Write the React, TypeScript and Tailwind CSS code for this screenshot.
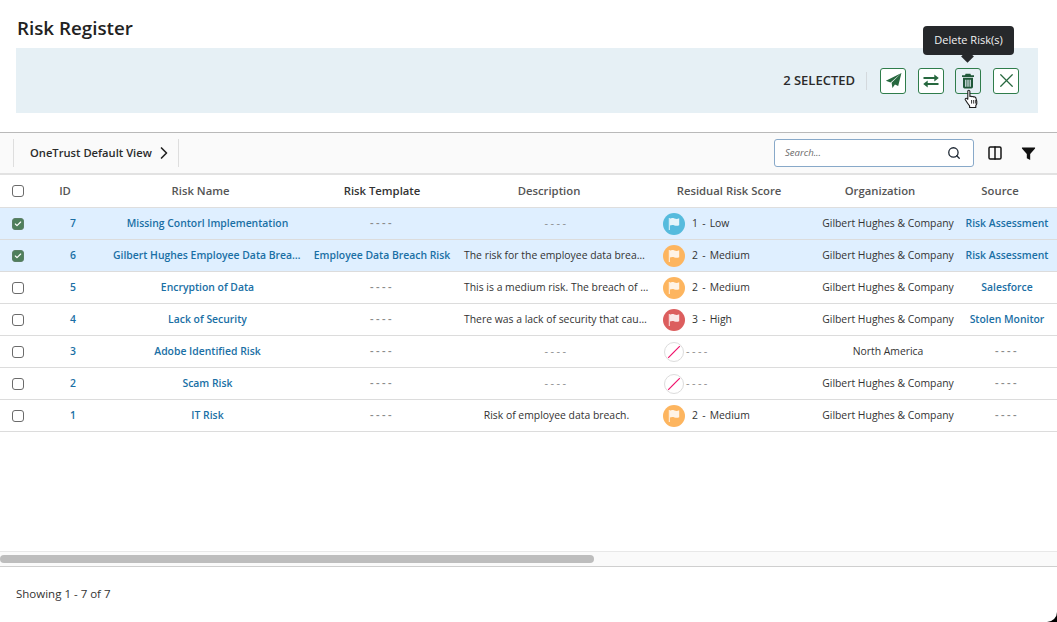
import { ChevronRight, Columns2, Search, X, Check } from "lucide-react";

type Row = {
  id: number;
  name: string;
  template?: string;
  desc?: string;
  score?: { label: string; color: string };
  org: string;
  source?: string;
  selected?: boolean;
};

const low = { label: "1 - Low", color: "bg-[#56bbdd]" };
const medium = { label: "2 - Medium", color: "bg-[#fdb55f]" };
const high = { label: "3 - High", color: "bg-[#dc5e5e]" };

const rows: Row[] = [
  { id: 7, name: "Missing Contorl Implementation", score: low, org: "Gilbert Hughes & Company", source: "Risk Assessment", selected: true },
  {
    id: 6,
    name: "Gilbert Hughes Employee Data Breach",
    template: "Employee Data Breach Risk",
    desc: "The risk for the employee data breach was high",
    score: medium,
    org: "Gilbert Hughes & Company",
    source: "Risk Assessment",
    selected: true,
  },
  { id: 5, name: "Encryption of Data", desc: "This is a medium risk. The breach of data", score: medium, org: "Gilbert Hughes & Company", source: "Salesforce" },
  { id: 4, name: "Lack of Security", desc: "There was a lack of security that caused it", score: high, org: "Gilbert Hughes & Company", source: "Stolen Monitor" },
  { id: 3, name: "Adobe Identified Risk", org: "North America" },
  { id: 2, name: "Scam Risk", org: "Gilbert Hughes & Company" },
  { id: 1, name: "IT Risk", desc: "Risk of employee data breach.", score: medium, org: "Gilbert Hughes & Company" },
];

const gridCols = "grid grid-cols-[36px_74px_197px_150px_200px_150px_162px_76px] items-center";

const Dashes = () => <span className="text-[#8a8a8a] tracking-[2.4px] text-[11px]">----</span>;

const Flag = () => (
  <svg viewBox="0 0 14 14" className="w-[14px] h-[14px]" fill="#ffffff" fillOpacity="0.85">
    <path d="M1.8 1h1v12h-1z" />
    <path d="M2.8 1.7c1.7-.9 3.2-.7 4.7-.2 1.5.5 2.9.6 4.7-.2v6.9c-1.8.8-3.2.7-4.7.2-1.5-.5-3-.7-4.7.2z" />
  </svg>
);

const ScoreBadge = ({ color }: { color: string }) => (
  <span className={`w-[22px] h-[22px] rounded-full flex items-center justify-center ${color}`}>
    <Flag />
  </span>
);

const EmptyBadge = () => (
  <span className="w-[20px] h-[20px] ml-px rounded-full border border-[#dcdcdc] bg-white flex items-center justify-center">
    <svg viewBox="0 0 20 20" className="w-[20px] h-[20px]">
      <path d="M3.5 16.5 16.5 3.5" stroke="#f0106a" strokeWidth="1.3" />
    </svg>
  </span>
);

const Checkbox = ({ checked }: { checked?: boolean }) =>
  checked ? (
    <span className="w-3 h-3 rounded-[3px] bg-[#4f7f5c] border border-[#5c7f66] flex items-center justify-center">
      <Check size={8} strokeWidth={3.5} className="text-white" />
    </span>
  ) : (
    <span className="w-3 h-3 rounded-[3px] border border-[#6b6b6b] bg-white" />
  );

const ActionButton = ({ children, active }: { children: React.ReactNode; active?: boolean }) => (
  <button
    className={`w-[26px] h-[26px] rounded-[3px] border border-[#2f7d4b] flex items-center justify-center text-[#27683f] ${
      active ? "bg-[#e6eff5]" : "bg-white"
    }`}
  >
    {children}
  </button>
);

export default function App() {
  return (
    <div className="w-[1057px] h-[622px] overflow-hidden bg-black font-['Open_Sans','Noto_Sans',sans-serif]">
      <div className="relative w-full h-full bg-white rounded-br-[10px] overflow-hidden flex flex-col">
        <h1 className="pl-[17px] h-[48px] flex items-center pt-[9px] text-[18.8px] font-semibold text-[#222]">Risk Register</h1>

        <div className="ml-4 mr-[19px] h-[65px] bg-[#e6f0f5] flex items-center justify-end pr-[19px]">
          <span className="text-[13px] font-semibold text-[#2b2b2b]">2 SELECTED</span>
          <span className="w-px h-[18px] bg-[#d4d9dd] ml-[11px] mr-[13px]" />
          <div className="flex gap-[11.67px]">
            <ActionButton>
              <svg viewBox="0 0 16 16" className="w-[17px] h-[17px]" fill="currentColor">
                <path d="M15.5 1 .8 8.2l4.4 1.6zM15.5 1 6.2 10.2 7 15l2.4-3.3 3 1.4z" />
              </svg>
            </ActionButton>
            <ActionButton>
              <svg viewBox="0 0 18 18" className="w-[18px] h-[18px]" fill="currentColor">
                <path d="M1.5 5h10.8V2.4L16.8 6l-4.5 3.6V7H1.5z" />
                <path d="M16.5 11H5.7V8.4L1.2 12l4.5 3.6V13h10.8z" />
              </svg>
            </ActionButton>
            <ActionButton active>
              <svg viewBox="0 0 16 16" className="w-[16px] h-[16px]" fill="#20583a">
                <path d="M5.6.8h4.8l.6 1.4H14v1.7H2V2.2h3zM3 4.8h10v9a1.6 1.6 0 0 1-1.6 1.6H4.6A1.6 1.6 0 0 1 3 13.8zm2.2 1.9v7h1.2v-7zm2.2 0v7h1.2v-7zm2.2 0v7h1.2v-7z" />
              </svg>
            </ActionButton>
            <ActionButton>
              <X size={23} strokeWidth={1.3} />
            </ActionButton>
          </div>
        </div>

        {/* Tooltip over the delete button */}
        <div className="absolute left-[923px] top-[26px] w-[91px] h-[29px] rounded bg-[#26282b] text-[#f2f2f2] text-[11px] flex items-center justify-center">
          Delete Risk(s)
          <span className="absolute left-[40px] top-[26px] w-[9px] h-[9px] rotate-45 bg-[#26282b]" />
        </div>

        {/* Hand cursor */}
        <svg viewBox="0 0 16 20" className="absolute left-[964px] top-[89px] w-[16px] h-[20px]">
          <path
            d="M4 1.6c.8-.7 1.9-.2 1.9.9v5c.7-.5 1.6-.4 2 .2.6-.4 1.5-.3 1.9.4.7-.4 1.7-.1 2 .7l1 3.5c.3 1.5-.1 3-1 4.3v1.9H5.6v-1.7C4 15 2.6 13 1.3 10.8c-.5-.9.5-2 1.5-1.4l1 .8V2.6c0-.4 0-.8.2-1z"
            fill="white"
            stroke="#1c1c1c"
            strokeWidth="1.1"
            strokeLinejoin="round"
          />
          <path d="M7.6 11v3.6M9.7 11v3.6M11.7 11v3.6" stroke="#1c1c1c" strokeWidth=".9" />
        </svg>

        {/* Toolbar */}
        <div className="mt-[19px] h-[43px] border-t border-[#b9b9b9] border-b-2 border-b-[#e2e2e2] bg-[#fafafa] flex items-center">
          <span className="ml-[13px] w-px h-[28px] bg-[#dedede]" />
          <span className="ml-4 text-[11.2px] font-semibold text-[#2b2b2b]">OneTrust Default View</span>
          <ChevronRight size={20} strokeWidth={2} className="ml-[2px] text-[#222]" />
          <span className="ml-[4px] w-px h-[28px] bg-[#dedede]" />
          <div className="ml-auto w-[200px] h-[28px] rounded-[3px] border border-[#88a9c9] bg-white flex items-center justify-between pl-[10px] pr-[12px]">
            <span className="italic text-[9.6px] text-[#6a6a6a]">Search...</span>
            <Search size={14} strokeWidth={2.2} className="text-[#1d2733]" />
          </div>
          <Columns2 size={16} strokeWidth={2.2} className="ml-[13px] text-[#111]" />
          <svg viewBox="0 0 16 16" className="ml-[18px] mr-[21px] w-[15px] h-[15px]" fill="#111">
            <path d="M1 1.5h14v1.2L9.8 8.6V15l-3.6-2V8.6L1 2.7z" />
          </svg>
        </div>

        {/* Header row */}
        <div className={`${gridCols} h-[33px] border-b border-[#dedede] text-[11.3px] font-semibold text-[#555]`}>
          <div className="flex justify-center">
            <Checkbox />
          </div>
          <div className="text-center pr-4">ID</div>
          <div className="text-center pr-[16px]">Risk Name</div>
          <div className="text-center text-[#333]">Risk Template</div>
          <div className="text-center pr-4">Description</div>
          <div className="text-center pr-[6px]">Residual Risk Score</div>
          <div className="text-center pr-4">Organization</div>
          <div className="text-center pr-[14px] whitespace-nowrap">Source</div>
        </div>

        {/* Data rows */}
        {rows.map((row) => (
          <div
            key={row.id}
            className={`${gridCols} h-[32px] border-b border-[#dcdcdc] text-[10.4px] ${row.selected ? "bg-[#dfefff]" : "bg-white"}`}
          >
            <div className="flex justify-center">
              <Checkbox checked={row.selected} />
            </div>
            <div className="text-center font-semibold text-[#1a6fa5]">{row.id}</div>
            <div className="truncate text-center pl-[3px] pr-[5px] font-semibold text-[#1a6fa5]">{row.name}</div>
            <div className="text-center whitespace-nowrap font-semibold text-[#1a6fa5]">{row.template ?? <Dashes />}</div>
            <div className="truncate text-center pl-[7px] pr-[8px] text-[#333]">{row.desc ?? <Dashes />}</div>
            <div className="flex items-center pl-[6px] gap-[7px] text-[#333] [word-spacing:1.5px]">
              {row.score ? <ScoreBadge color={row.score.color} /> : <EmptyBadge />}
              {row.score ? row.score.label : <span className="-ml-[5px]"><Dashes /></span>}
            </div>
            <div className="text-center text-[#333] whitespace-nowrap">{row.org}</div>
            <div className="flex justify-center whitespace-nowrap font-semibold text-[#1a6fa5]">{row.source ?? <Dashes />}</div>
          </div>
        ))}

        {/* Horizontal scrollbar */}
        <div className="mt-auto">
          <div className="h-[16px] border-t border-[#e8e8e8] border-b border-b-[#cfcfcf] bg-[#fafafa] flex items-center">
            <div className="w-[594px] h-[8px] rounded bg-[#bdbdbd]" />
          </div>
          <div className="h-[55px] pl-4 pb-[2px] flex items-center text-[11.5px] text-[#333]">Showing 1 - 7 of 7</div>
        </div>
      </div>
    </div>
  );
}
